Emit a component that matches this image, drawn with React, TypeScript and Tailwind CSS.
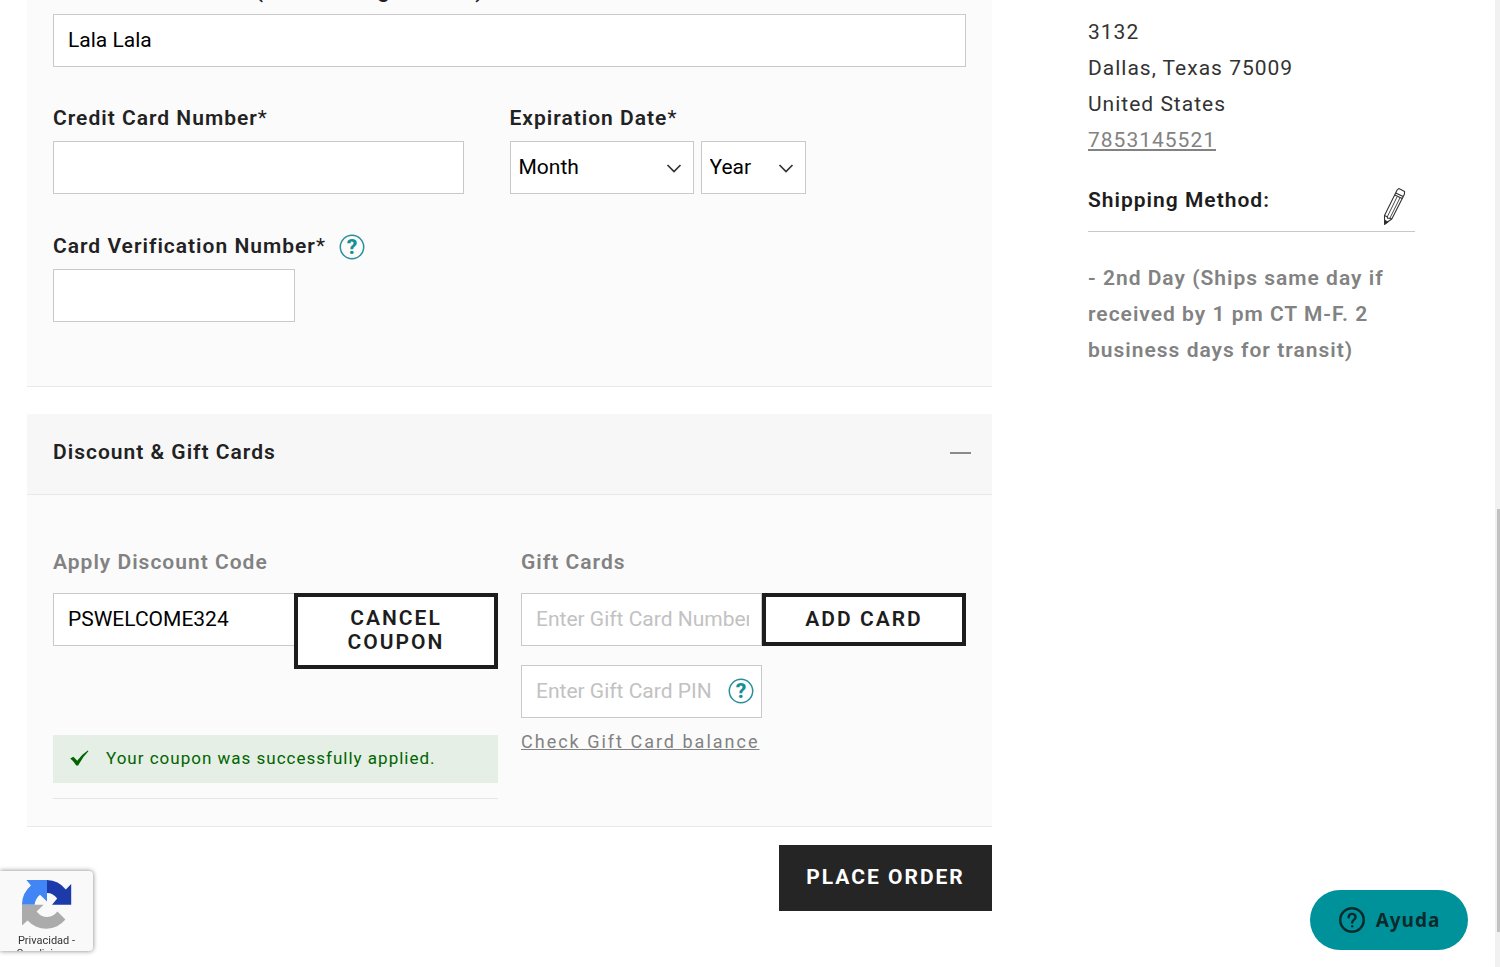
import { useState } from "react";
import type { ReactNode } from "react";

const inputClass =
  "h-[53px] border border-[#c9c9cc] bg-white pr-3 pl-3.5 pb-0.5 text-[21px] text-black placeholder:text-[#c2c2c2] outline-none";
const labelClass = "block text-[21px] leading-9 font-semibold tracking-[1px] text-[#222]";
const groupTitleClass = "block text-[21px] leading-9 font-semibold tracking-[1px] text-[#828282] mb-[13px]";
const outlineButtonClass =
  "w-[204px] shrink-0 border-4 border-[#1d1d1d] bg-white px-6 pb-0.5 text-[21px] leading-6 font-semibold tracking-[2px] text-[#1d1d1d] uppercase";

function HelpButton({ label }: { label: string }) {
  return (
    <button type="button" aria-label={label} className="block shrink-0">
      <svg width="26" height="26" viewBox="0 0 26 26" fill="none">
        <circle cx="13" cy="13" r="11.7" stroke="#2b8f98" strokeWidth="1.5" />
        <text x="13" y="20" textAnchor="middle" fontSize="21" fontWeight="800" fill="#168f98">?</text>
      </svg>
    </button>
  );
}

function Required() {
  return <span className="font-normal">*</span>;
}

function SelectBox({ id, label, className, children }: {
  id: string; label: string; className: string; children: ReactNode;
}) {
  return (
    <div className={`relative ${className}`}>
      <select id={id} aria-label={label}
        className="h-[53px] w-full appearance-none border border-[#c9c9cc] bg-white pr-9 pl-2 text-[21px] text-black">
        {children}
      </select>
      <svg className="pointer-events-none absolute top-[22px] right-3" width="16" height="11" viewBox="0 0 16 11"
        fill="none" stroke="#333" strokeWidth="1.7">
        <path d="M1.5 2 8 8.5 14.5 2" />
      </svg>
    </div>
  );
}

function PencilIcon() {
  return (
    <svg width="24" height="40" viewBox="0 0 24 40" fill="none" stroke="#333" strokeWidth="1.1" strokeLinejoin="round">
      <path d="M14 4.2 15.8 2.6 21.6 5.4 21.4 8.2 8.8 33 1.6 38 1.5 29.6Z" />
      <path d="M12.7 7 20.2 10.6M11.7 9 19.2 12.6" />
      <path d="M14.2 10.6 4.2 31M17 11.8 6.8 32.4" strokeWidth="0.9" />
      <path d="M1.5 29.6 4.2 30.8 4.5 32.2 6.8 32.2 8.8 33" />
      <path d="M1.6 34.2 4.8 36 1.6 38.4Z" fill="#222" />
    </svg>
  );
}

function RecaptchaLogo() {
  return (
    <svg width="50" height="50" viewBox="0 0 50 50">
      <path fill="#1c3aa9" d="M25 0A25 25 0 0 1 43.8 9.4L49.2 4V24.8H30L35.2 18.6Q31.4 13 25 13Z" />
      <path fill="#4285f4" d="M25 0H4.4L9 5.4A25 25 0 0 0 0 24.8H12.6Q13.4 18.4 18 14.8L25 21.4Z" />
      <path fill="#ababab" d="M0 24.8H21.6L14.6 31.4Q19 37 25.4 37 31.4 36.8 35.4 31.6L43.4 39.6A25 25 0 0 1 5.6 40.6L0 45.6Z" />
    </svg>
  );
}

export default function App() {
  const [holder, setHolder] = useState("Lala Lala");
  const [coupon, setCoupon] = useState("PSWELCOME324");

  return (
    <div className="flex h-screen overflow-hidden bg-white font-[Roboto,sans-serif] text-[#222]">
      <div className="flex min-w-0 flex-1 gap-24 pr-20 pl-[27px]">
        <main className="-mt-[27px] min-w-0 flex-1">
          <section className="border-b border-[#e8e8e8] bg-[#fbfbfb] px-[26px] pb-16">
            <label htmlFor="holder" className={labelClass}>Name on This Card (as on billing records)</label>
            <input id="holder" value={holder} onChange={(e) => setHolder(e.target.value)}
              className={`${inputClass} mt-[5px] w-full`} />

            <div className="mt-[33px] grid grid-cols-2">
              <div>
                <label htmlFor="number" className={labelClass}>Credit Card Number<Required /></label>
                <input id="number" className={`${inputClass} mt-[5px] w-9/10`} />
              </div>
              <fieldset>
                <legend className={labelClass}>Expiration Date<Required /></legend>
                <div className="mt-[5px] flex gap-[7px]">
                  <SelectBox id="month" label="Month" className="w-[184px]"><option>Month</option></SelectBox>
                  <SelectBox id="year" label="Year" className="w-[105px]"><option>Year</option></SelectBox>
                </div>
              </fieldset>
            </div>

            <div className="mt-[34px]">
              <div className="flex items-center gap-[13px]">
                <label htmlFor="cvn" className={labelClass}>Card Verification Number<Required /></label>
                <div className="pt-0.5"><HelpButton label="What is this?" /></div>
              </div>
              <input id="cvn" className={`${inputClass} mt-[5px] block w-[242px]`} />
            </div>
          </section>

          <section className="mt-[27px] border-b border-[#e8e8e8] bg-[#fbfbfb]">
            <header className="flex justify-between border-b border-[#e8e8e8] bg-[#f7f7f7] px-[26px] pt-5 pb-6">
              <h2 className={labelClass}>Discount &amp; Gift Cards</h2>
              <button type="button" aria-label="Collapse" className="-mr-[5px] pt-0.5">
                <span className="block h-0.5 w-[21px] bg-[#8a8a8a]" />
              </button>
            </header>

            <div className="grid grid-cols-2 gap-[23px] px-[26px] pt-[49px] pb-[27px]">
              <div>
                <label htmlFor="coupon" className={groupTitleClass}>Apply Discount Code</label>
                <div className="flex items-start">
                  <input id="coupon" value={coupon} onChange={(e) => setCoupon(e.target.value)}
                    className={`${inputClass} min-w-0 flex-1 border-r-0`} />
                  <button type="button" className={`${outlineButtonClass} h-[76px]`}>Cancel Coupon</button>
                </div>
                <p role="status" className="mt-[66px] flex h-12 items-center gap-4 bg-[#e5efe5] pl-4 text-[17px] tracking-[1px] text-[#006400]">
                  <svg width="21" height="18" viewBox="0 0 21 18" fill="#006400">
                    <path d="M1.2 8.6 4.4 6.8 8.2 10.8Q12.6 4.6 18.8.6L19.4 1.3Q13.4 7.2 9.2 15.6L7.2 15.6Q4.8 11.4 1.2 8.6Z" />
                  </svg>
                  Your coupon was successfully applied.
                </p>
                <hr className="mt-[15px] border-[#e5e5e5]" />
              </div>

              <div>
                <label htmlFor="gift" className={groupTitleClass}>Gift Cards</label>
                <div className="flex items-start">
                  <input id="gift" placeholder="Enter Gift Card Number" className={`${inputClass} min-w-0 flex-1`} />
                  <button type="button" className={`${outlineButtonClass} h-[53px]`}>Add Card</button>
                </div>
                <div className="relative mt-[19px] mr-[204px]">
                  <input aria-label="Gift card PIN" placeholder="Enter Gift Card PIN" className={`${inputClass} w-full`} />
                  <div className="absolute top-[13px] right-2">
                    <HelpButton label="Where is my PIN?" />
                  </div>
                </div>
                <a href="#balance" className="mt-2.5 inline-block text-[18px] leading-7 tracking-[2px] text-[#828282] underline">
                  Check Gift Card balance
                </a>
              </div>
            </div>
          </section>

          <div className="mt-[18px] flex justify-end">
            <button type="button"
              className="h-[66px] w-[213px] bg-[#252525] text-[21px] font-bold tracking-[2px] text-white">
              PLACE ORDER
            </button>
          </div>
        </main>

        <aside className="w-[327px] shrink-0 pt-3.5 text-[21px] leading-9 tracking-[1px]">
          <address className="text-[#333] not-italic">
            3132<br />
            Dallas, Texas 75009<br />
            United States<br />
            <a href="tel:7853145521" className="text-[#828282] underline">7853145521</a>
          </address>
          <div className="mt-6 flex h-[50px] items-start justify-between border-b border-[#c8c8c8] pr-2">
            <h2 className="font-semibold text-[#1d1d1d]">Shipping Method:</h2>
            <button type="button" aria-label="Edit shipping method" className="pt-1"><PencilIcon /></button>
          </div>
          <p className="mt-7 font-semibold text-[#828282]">
            - 2nd Day (Ships same day if received by 1 pm CT M-F. 2 business days for transit)
          </p>
        </aside>
      </div>

      {/* Scroll track */}
      <div className="flex w-[5px] flex-col items-end bg-[#f1f1f1]">
        <div className="flex-[509]" />
        <div className="w-[3px] flex-[423] bg-[#c1c1c1]" />
        <div className="flex-[35]" />
      </div>

      <div className="fixed bottom-4 left-0 h-20 w-[93px] overflow-hidden rounded-r-sm bg-[#f9f9f9] pt-[9px] text-center shadow-[0_0_5px_gray]">
        <div className="flex justify-center"><RecaptchaLogo /></div>
        <p className="mt-1 text-[11px] leading-[13px] text-[#333]">Privacidad -<br />Condiciones</p>
      </div>

      <button type="button"
        className="fixed right-8 bottom-[17px] flex h-[60px] w-[158px] items-center justify-center gap-2.5 rounded-full bg-[#00929b] font-['Noto_Sans',sans-serif] text-[19px] font-bold tracking-[1px] text-[#0c2a2c]">
        <svg width="28" height="28" viewBox="0 0 28 28" fill="none" stroke="currentColor" strokeWidth="2.4" strokeLinecap="round">
          <circle cx="14" cy="14" r="11.8" />
          <path d="M10.6 11.4C10.7 6.8 17.6 6.8 17.6 11.2 17.6 13.6 14.2 13.8 14.2 16.6" />
          <path d="M14.2 20.2V20.3" />
        </svg>
        Ayuda
      </button>
    </div>
  );
}
